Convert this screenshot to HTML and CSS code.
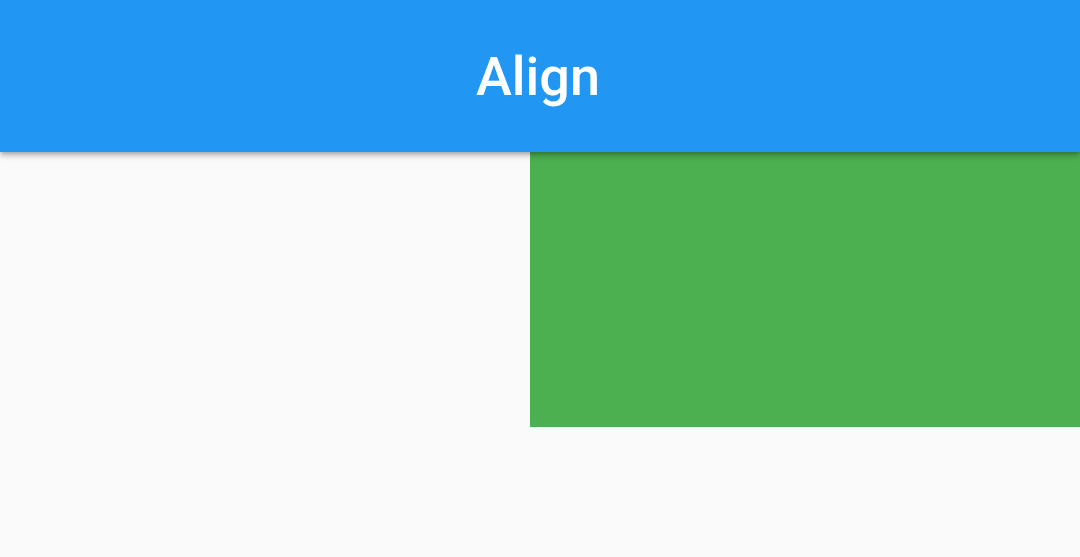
FILE: index.html
```
<!DOCTYPE html>
<html>
<head>
<meta charset="utf-8">
<link rel="stylesheet" href="styles.css">
</head>
<body>
<header class="appbar"><h1 class="title">Align</h1></header>
<main class="body">
  <div class="box"></div>
</main>
</body>
</html>
```
FILE: styles.css
```
html, body { margin: 0; padding: 0; }
body {
  width: 1080px;
  height: 557px;
  background: #fafafa;
  font-family: Roboto, "Noto Sans", sans-serif;
  overflow: hidden;
  display: flex;
  flex-direction: column;
}
.appbar {
  height: 152px;
  flex: none;
  box-sizing: border-box;
  padding-top: 2px;
  padding-right: 4px;
  background: #2196f3;
  display: flex;
  align-items: center;
  justify-content: center;
  box-shadow: 0 2px 4px -1px rgba(0,0,0,0.2), 0 4px 5px 0 rgba(0,0,0,0.14), 0 1px 10px 0 rgba(0,0,0,0.12);
  position: relative;
  z-index: 1;
}
.title {
  margin: 0;
  color: #fff;
  font-size: 54px;
  font-weight: 500;
  line-height: 1;
}
.body {
  flex: 1;
  display: flex;
  justify-content: flex-end;
  align-items: flex-start;
}
.box {
  width: 550px;
  height: 275px;
  background: #4caf50;
}
```
